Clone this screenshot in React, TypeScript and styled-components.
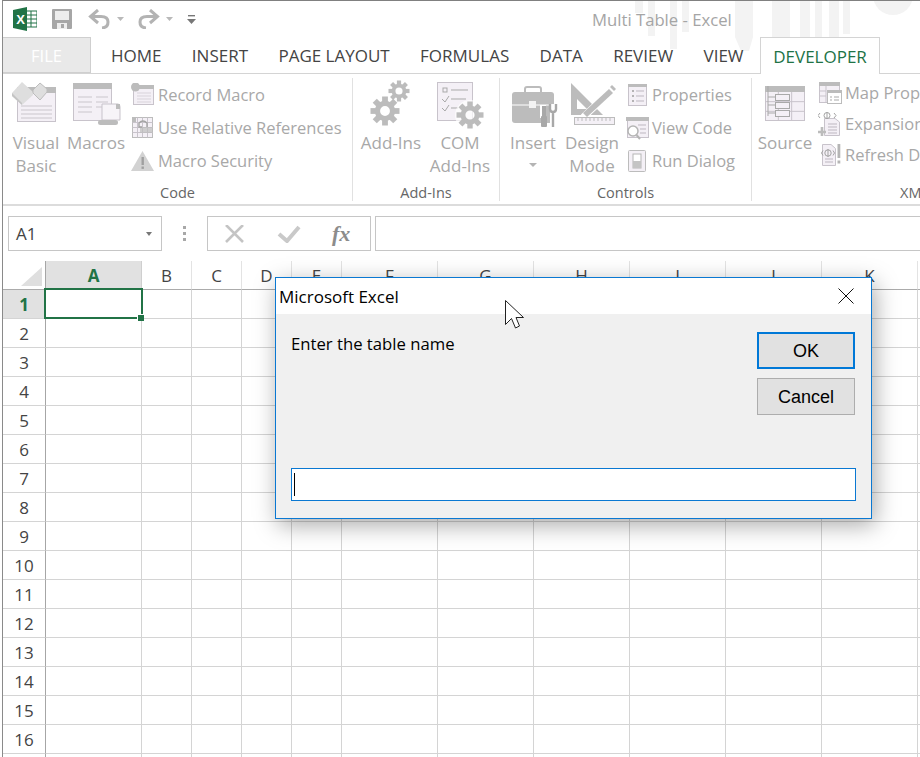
import React from "react";
import styled, { createGlobalStyle } from "styled-components";

const UI_FONT = `"Open Sans", "Noto Sans", "Liberation Sans", sans-serif`;
const GREY = "#bcbcbc";
const LAV = "#f4f0f6";
const EDGE = "#c8c3cb";
const LINE = "#d4d4d4";

const GlobalStyle = createGlobalStyle`
  html, body {
    margin: 0;
    padding: 0;
    background: #fff;
    overflow: hidden;
  }
  body {
    font-family: ${UI_FONT};
  }
`;

const Page = styled.div`
  width: 920px;
  height: 757px;
  overflow: hidden;
  padding-left: 2px;
  box-sizing: border-box;
`;

const Window = styled.div`
  position: relative;
  width: 918px;
  height: 757px;
  box-sizing: border-box;
  border-left: 1px solid #8a8a8a;
  border-top: 1px solid #808080;
  overflow: hidden;
`;

const TitleBar = styled.div`
  position: relative;
  height: 36px;
  display: flex;
  align-items: center;
`;

const TitlePattern = styled.svg`
  position: absolute;
  left: 0;
  top: 0;
`;

const QatIcon = styled.svg<{ $ml: number }>`
  position: relative;
  flex-shrink: 0;
  margin-left: ${(p) => p.$ml}px;
`;

const TitleText = styled.div`
  position: relative;
  margin-left: 396px;
  font-size: 16.7px;
  color: #a5a5a5;
  white-space: nowrap;
  margin-top: 1px;
`;

const TabBar = styled.div`
  position: relative;
  height: 36px;
  display: flex;
  border-bottom: 1px solid ${LINE};
`;

const FileTab = styled.div`
  width: 88px;
  height: 36px;
  margin-right: 4.8px;
  box-sizing: border-box;
  background: #e9e9e9;
  border: 1px solid #cfcfcf;
  border-left: none;
  display: flex;
  align-items: center;
  justify-content: center;
  color: #fff;
  font-size: 16.5px;
`;

const Tab = styled.div<{ $active?: boolean }>`
  height: 36px;
  box-sizing: border-box;
  display: flex;
  align-items: center;
  white-space: nowrap;
  font-size: 17px;
  color: ${(p) => (p.$active ? "#217346" : "#444")};
  padding: ${(p) => (p.$active ? "0 12.5px" : "0 15.2px")};
  ${(p) =>
    p.$active &&
    `
    margin-left: 1px;
    height: 37px;
    margin-bottom: -1px;
    background: #fff;
    border: 1px solid ${LINE};
    border-bottom: none;
  `}
`;

const Ribbon = styled.div`
  height: 123px;
  padding: 4px 0 3px;
  display: flex;
  border-bottom: 2px solid #dcdcdc;
`;

const Group = styled.div<{ $w: number; $pad: number }>`
  width: ${(p) => p.$w}px;
  flex-shrink: 0;
  box-sizing: border-box;
  display: flex;
  flex-direction: column;
  border-right: 1px solid #e1e1e1;
  padding-left: ${(p) => p.$pad}px;
`;

const GroupBody = styled.div`
  flex: 1;
  display: flex;
  gap: 2px;
`;

const GroupLabel = styled.div<{ $pad: number }>`
  margin-left: -${(p) => p.$pad}px;
  height: 16px;
  line-height: 16px;
  text-align: center;
  font-size: 14.5px;
  color: #666;
  white-space: nowrap;
`;

const LargeButton = styled.div<{ $w: number }>`
  width: ${(p) => p.$w}px;
  flex-shrink: 0;
  display: flex;
  flex-direction: column;
  align-items: center;
  color: #a8a8a8;
  font-size: 17px;
  line-height: 23px;
  text-align: center;
  white-space: nowrap;
`;

const LargeIcon = styled.svg`
  display: block;
  margin: 2px 0 1px;
  flex-shrink: 0;
`;

const DropCaret = styled.span`
  display: block;
  width: 0;
  height: 0;
  margin-top: 9px;
  border-left: 4px solid transparent;
  border-right: 4px solid transparent;
  border-top: 4px solid #b4b4b4;
`;

const SmallColumn = styled.div<{ $ml: number; $mt?: number }>`
  display: flex;
  flex-direction: column;
  margin-left: ${(p) => p.$ml}px;
  margin-top: ${(p) => p.$mt ?? 0}px;
`;

const SmallRow = styled.div<{ $h: number; $slot: number }>`
  height: ${(p) => p.$h}px;
  display: grid;
  grid-template-columns: ${(p) => p.$slot}px auto;
  align-items: center;
  color: #a8a8a8;
  font-size: 16.5px;
  white-space: nowrap;
`;

const FormulaBar = styled.div`
  height: 55px;
  box-sizing: border-box;
  padding: 10px 0 10px 5px;
  display: flex;
  align-items: flex-start;
`;

const BarBox = styled.div<{ $w: number }>`
  width: ${(p) => p.$w}px;
  height: 35px;
  flex-shrink: 0;
  box-sizing: border-box;
  border: 1px solid #c6c6c6;
  display: flex;
  align-items: center;
`;

const NameText = styled.span`
  flex: 1;
  padding-left: 7px;
  font-size: 17px;
  color: #444;
`;

const NameCaret = styled.span`
  width: 0;
  height: 0;
  margin-right: 9px;
  border-left: 3.5px solid transparent;
  border-right: 3.5px solid transparent;
  border-top: 4px solid #777;
`;

const Grip = styled.div`
  width: 45px;
  height: 35px;
  flex-shrink: 0;
  display: flex;
  flex-direction: column;
  align-items: center;
  justify-content: center;
  gap: 3px;
  span {
    width: 3px;
    height: 3px;
    background: #a8a8a8;
  }
`;

const BarGlyph = styled.svg<{ $ml: number }>`
  flex-shrink: 0;
  margin-left: ${(p) => p.$ml}px;
`;

const FxIcon = styled.span`
  font-family: "Liberation Serif", serif;
  font-style: italic;
  font-weight: 700;
  font-size: 22px;
  color: #8c8c8c;
  margin-left: 30px;
`;

const FormulaInput = styled(BarBox)`
  margin-left: 4px;
  border-right: none;
`;

const Sheet = styled.div`
  display: grid;
  grid-template-columns: 43px 96px repeat(4, 50px) repeat(6, 96px) 40px;
  grid-auto-rows: 29px;
`;

const Corner = styled.div`
  display: flex;
  align-items: flex-end;
  justify-content: flex-end;
  box-sizing: border-box;
  padding: 0 3px 3px 0;
  border-right: 1px solid #a6a6a6;
  border-bottom: 1px solid #ababab;
  svg {
    display: block;
  }
`;

const ColHead = styled.div<{ $on?: boolean }>`
  box-sizing: border-box;
  display: flex;
  align-items: center;
  justify-content: center;
  font-size: 17px;
  padding-top: 1px;
  color: ${(p) => (p.$on ? "#217346" : "#444")};
  font-weight: ${(p) => (p.$on ? 700 : 400)};
  background: ${(p) => (p.$on ? "#e1e1e1" : "#fff")};
  border-right: 1px solid ${(p) => (p.$on ? "#cfcfcf" : "#e3e3e3")};
  border-bottom: 1px solid #ababab;
`;

const RowHead = styled.div<{ $on?: boolean }>`
  box-sizing: border-box;
  display: flex;
  align-items: center;
  justify-content: center;
  font-size: 17px;
  color: ${(p) => (p.$on ? "#217346" : "#444")};
  font-weight: ${(p) => (p.$on ? 700 : 400)};
  background: ${(p) => (p.$on ? "#e1e1e1" : "#fff")};
  border-right: 1px solid #a6a6a6;
  border-bottom: 1px solid ${LINE};
`;

const Cell = styled.div`
  position: relative;
  box-sizing: border-box;
  border-right: 1px solid ${LINE};
  border-bottom: 1px solid ${LINE};
`;

const Selection = styled.div`
  position: absolute;
  left: -2px;
  top: -2px;
  right: -2px;
  bottom: -1px;
  border: 2px solid #217346;
  z-index: 1;
  &::after {
    content: "";
    position: absolute;
    right: -3px;
    bottom: -4px;
    width: 6px;
    height: 6px;
    background: #217346;
    border-left: 1px solid #fff;
    border-top: 1px solid #fff;
  }
`;

const Dialog = styled.div`
  position: absolute;
  left: 272px;
  top: 276px;
  width: 597px;
  height: 242px;
  box-sizing: border-box;
  display: flex;
  flex-direction: column;
  background: #f0f0f0;
  border: 1px solid #0a78d2;
  box-shadow: 3px 6px 22px rgba(0, 0, 0, 0.34);
  z-index: 3;
`;

const DialogTitle = styled.div`
  height: 36px;
  flex-shrink: 0;
  background: #fff;
  display: flex;
  align-items: center;
  justify-content: space-between;
  padding: 0 17px 0 3px;
  font-size: 17px;
  color: #000;
`;

const DialogBody = styled.div`
  flex: 1;
  display: flex;
  flex-direction: column;
  justify-content: space-between;
  padding: 18px 15px 17px 15px;
`;

const DialogTop = styled.div`
  display: flex;
  justify-content: space-between;
`;

const Message = styled.div`
  font-size: 16.7px;
  line-height: 24px;
  color: #000;
`;

const ButtonStack = styled.div`
  display: flex;
  flex-direction: column;
  gap: 9px;
  margin-right: 1px;
`;

const DialogButton = styled.div<{ $primary?: boolean }>`
  width: 98px;
  height: 37px;
  box-sizing: border-box;
  padding-top: 1px;
  display: flex;
  align-items: center;
  justify-content: center;
  background: #e1e1e1;
  border: ${(p) => (p.$primary ? "2px solid #0078d7" : "1px solid #adadad")};
  font-family: "Liberation Sans", sans-serif;
  font-size: 18px;
  color: #000;
`;

const NameField = styled.div`
  height: 33px;
  box-sizing: border-box;
  background: #fff;
  border: 1px solid #0a78d2;
  display: flex;
  align-items: center;
  padding-left: 2px;
`;

const TextCaret = styled.span`
  width: 1px;
  height: 23px;
  background: #000;
`;

const MousePointer = styled.svg`
  position: absolute;
  left: 500px;
  top: 297px;
  z-index: 4;
`;

const SmallSvg = styled.svg`
  display: block;
`;

const Gear = ({ cx, cy, r, fill = GREY }: { cx: number; cy: number; r: number; fill?: string }) => (
  <g>
    {[0, 45, 90, 135, 180, 225, 270, 315].map((a) => (
      <rect
        key={a}
        x={cx - r * 0.2}
        y={cy - r}
        width={r * 0.4}
        height={r * 0.5}
        fill={fill}
        transform={`rotate(${a} ${cx} ${cy})`}
      />
    ))}
    <circle cx={cx} cy={cy} r={r * 0.52} fill="none" stroke={fill} strokeWidth={r * 0.36} />
  </g>
);

const gridLines = (x: number, y: number, w: number, h: number, cols: number, rows: number) => {
  const out: React.ReactNode[] = [];
  for (let i = 1; i < cols; i++) {
    const px = x + (w * i) / cols;
    out.push(<path key={"c" + i} d={`M${px} ${y}V${y + h}`} stroke={EDGE} strokeWidth="1" />);
  }
  for (let i = 1; i < rows; i++) {
    const py = y + (h * i) / rows;
    out.push(<path key={"r" + i} d={`M${x} ${py}H${x + w}`} stroke={EDGE} strokeWidth="1" />);
  }
  return out;
};

const Sheetish = ({ x, y, w, h, head = 6 }: { x: number; y: number; w: number; h: number; head?: number }) => (
  <>
    <rect x={x + 0.5} y={y + 0.5} width={w - 1} height={h - 1} fill={LAV} stroke={EDGE} />
    <rect x={x} y={y} width={w} height={head} fill={GREY} />
  </>
);

const VisualBasicIcon = () => (
  <LargeIcon width="56" height="50" viewBox="0 0 56 50">
    <Sheetish x={9} y={7} w={39} h={35} />
    <g stroke="#d8d3da" strokeWidth="1.4">
      <path d="M13 26H44M13 30H44M13 34H44M13 38H44" />
    </g>
    <path d="M4 13L14 2L25 12L25 15L14 25L4 16Z" fill="#dedede" />
    <path d="M4 13L14 23L14 25L4 16Z" fill="#c4c4c4" />
    <path d="M25 10L32 3L39 9L39 12L32 20L25 13Z" fill="#dedede" stroke="#bcbcbc" />
  </LargeIcon>
);

const MacrosIcon = () => (
  <LargeIcon width="60" height="50" viewBox="0 0 60 50">
    <Sheetish x={7} y={3} w={39} h={38} />
    <path d="M12 17H26M30 17H42M12 22H26M30 22H42M12 27H26M30 27H36M12 32H26" stroke="#d8d3da" strokeWidth="1.4" />
    <path d="M36 24H52Q54 24 54 27V40H36Z" fill="#f7f4f8" stroke={EDGE} />
    <rect x={32} y={40} width={20} height={5} rx="2.5" fill={GREY} />
    <rect x={50} y={24} width={4} height={5} fill={GREY} />
  </LargeIcon>
);

const AddInsIcon = () => (
  <LargeIcon width="66" height="50" viewBox="0 0 66 50">
    <Gear cx={41} cy={11} r={10.5} />
    <Gear cx={27} cy={31} r={14.5} />
  </LargeIcon>
);

const ComIcon = () => (
  <LargeIcon width="68" height="50" viewBox="0 0 68 50">
    <rect x={11.5} y={2.5} width={35} height={38} fill={LAV} stroke={EDGE} />
    <rect x={17} y={8} width={4} height={4} fill="none" stroke="#a9a9a9" />
    <path d="M25 10H42M25 19H40M25 28H32" stroke="#a9a9a9" />
    <path d="M16 19L19 22L23 16M16 28L19 31L23 25" fill="none" stroke="#a9a9a9" />
    <circle cx={44} cy={35} r={15} fill="#fff" opacity="0.7" />
    <Gear cx={44} cy={35} r={13.5} />
  </LargeIcon>
);

const InsertIcon = () => (
  <LargeIcon width="54" height="50" viewBox="0 0 54 50">
    <path d="M19 13V9Q19 7 21 7H33Q35 7 35 9V13" fill="none" stroke={GREY} strokeWidth="2" />
    <rect x={6} y={12} width={42} height={31} rx="3" fill={GREY} />
    <path d="M6 25H48" stroke="#fff" strokeWidth="1" />
    <rect x={23} y={21} width={7} height={7} fill="#f2f2f2" />
    <path d="M37 25V38M47 24V47" stroke="#fff" strokeWidth="6" />
    <rect x={36} y={26} width={4} height={10} fill="#a8a8a8" />
    <rect x={35} y={36} width={6} height={11} rx="1" fill="#a8a8a8" />
    <path d="M44 24V29Q44 32 47 32Q50 32 50 29V24M47 32V47" fill="none" stroke="#a8a8a8" strokeWidth="2.4" />
  </LargeIcon>
);

const DesignIcon = () => (
  <LargeIcon width="60" height="50" viewBox="0 0 60 50">
    <path fillRule="evenodd" d="M9 3L41 35H9ZM15 19V29H25Z" fill={GREY} />
    <path d="M20 35L50 6L54 10L25 37L19 38Z" fill="#fff" stroke="#fff" strokeWidth="2" />
    <path d="M21 33L47 9L51 13L25 37Z" fill={GREY} />
    <path d="M48 7L50 5L54 9L52 11Z" fill={GREY} />
    <rect x={12.5} y={37.5} width={40} height={7} fill={LAV} stroke={GREY} />
    <path d="M16 38V41M20 38V41M24 38V41M28 38V41M32 38V41M36 38V41M40 38V41M44 38V41M48 38V41" stroke={GREY} />
  </LargeIcon>
);

const SourceIcon = () => (
  <LargeIcon width="60" height="50" viewBox="0 0 60 50">
    <Sheetish x={10} y={6} w={40} h={35} />
    {gridLines(10, 12, 40, 29, 3, 3)}
    <path d="M13 6V36M13 17H20M13 25H20M13 33H20" stroke="#a9a9a9" />
    <rect x={20.5} y={14.5} width={14} height={6} fill={LAV} stroke="#a9a9a9" />
    <rect x={20.5} y={22.5} width={14} height={6} fill={LAV} stroke="#a9a9a9" />
    <rect x={20.5} y={30.5} width={14} height={6} fill={LAV} stroke="#a9a9a9" />
  </LargeIcon>
);

const Small = ({ children }: { children: React.ReactNode }) => (
  <SmallSvg width="24" height="24" viewBox="0 0 24 24">
    {children}
  </SmallSvg>
);

const RecordIcon = () => (
  <Small>
    <rect x={2.5} y={2.5} width={20} height={19} fill={LAV} stroke={EDGE} />
    <rect x={2} y={2} width={21} height={4} fill={GREY} />
    <path d="M6 10H20M6 13H20M6 16H20M6 19H20" stroke="#d8d3da" />
    <circle cx={4.5} cy={4} r={4.5} fill={GREY} />
  </Small>
);

const RelativeIcon = () => (
  <Small>
    <rect x={1.5} y={1.5} width={20} height={20} fill={LAV} stroke={GREY} />
    {gridLines(1.5, 1.5, 20, 20, 4, 4)}
    <rect x={1} y={1} width={4} height={5} fill={GREY} />
    <rect x={9} y={11} width={12} height={6} fill={GREY} opacity="0.7" />
    <path d="M8 7Q12 3 16 7V11M8 7V11H11" fill="none" stroke="#a3a3a3" strokeWidth="1.4" />
  </Small>
);

const SecurityIcon = () => (
  <Small>
    <path d="M11.5 2L23 22H0Z" fill="#d2d2d2" />
    <rect x={10.5} y={8} width={2.4} height={8} fill="#9f9f9f" />
    <rect x={10.5} y={17.5} width={2.4} height={2.4} fill="#9f9f9f" />
  </Small>
);

const PropertiesIcon = () => (
  <Small>
    <rect x={2.5} y={1.5} width={18} height={21} fill={LAV} stroke={EDGE} />
    <rect x={2} y={1} width={19} height={3} fill={GREY} />
    <path d="M6 8H8M6 13H8M6 18H8" stroke="#9f9f9f" strokeWidth="1.6" />
    <path d="M10 8H18M10 13H18M10 18H18" stroke="#bdb7c0" />
  </Small>
);

const ViewCodeIcon = () => (
  <Small>
    <rect x={1.5} y={2.5} width={21} height={19} fill={LAV} stroke={EDGE} />
    <rect x={0} y={1} width={23} height={4} fill={GREY} />
    <path d="M12 9H20M14 13H20M14 17H20" stroke="#bdb7c0" />
    <circle cx={7} cy={15} r={5} fill="#fff" stroke="#b5b5b5" strokeWidth="1.5" />
    <path d="M10.5 19L14 23" stroke="#b5b5b5" strokeWidth="2" />
  </Small>
);

const RunDialogIcon = () => (
  <Small>
    <rect x={2.5} y={1.5} width={17} height={21} rx="1" fill={LAV} stroke={GREY} />
    <rect x={7} y={5} width={8} height={14} fill="#fff" stroke="#b5b5b5" />
    <rect x={7} y={12} width={8} height={7} fill="#c4c4c4" />
  </Small>
);

const MapPropIcon = () => (
  <Small>
    <rect x={1.5} y={1.5} width={20} height={20} fill={LAV} stroke={EDGE} />
    <rect x={1} y={1} width={21} height={4} fill={GREY} />
    <path d="M8 5V21M1 10H8M1 15H8" stroke={EDGE} />
    <rect x={9.5} y={9.5} width={14} height={13} fill="#fff" stroke={GREY} />
    <rect x={9} y={9} width={15} height={3} fill={GREY} />
    <path d="M12 16H14M16 16H21M12 19H14M16 19H21" stroke="#a9a9a9" />
  </Small>
);

const ExpansionIcon = () => (
  <Small>
    <path d="M6.5 6.5H17L21.5 10V23.5H6.5Z" fill={LAV} stroke={EDGE} />
    <path d="M10 12H19M10 15H19M10 18H19M10 21H19" stroke="#bdb7c0" />
    <circle cx={9} cy={3.5} r={3} fill="none" stroke="#a3a3a3" />
    <path d="M2 1L0 3.5L2 6M16 1L18 3.5L16 6M9 0V7" fill="none" stroke="#a3a3a3" />
    <path d="M0 20H8M4 15V24" stroke={GREY} strokeWidth="2.6" />
  </Small>
);

const RefreshIcon = () => (
  <Small>
    <path d="M4.5 1.5H13L17.5 5.5V22.5H4.5Z" fill={LAV} stroke={EDGE} />
    <circle cx={10} cy={10} r={3.2} fill="none" stroke="#a3a3a3" />
    <path d="M5 7.5L3.5 10L5 12.5M15 7.5L16.5 10L15 12.5M10 6V14" fill="none" stroke="#a3a3a3" />
    <path d="M7 16H15M7 19H15" stroke="#bdb7c0" />
    <rect x={19.5} y={1} width={2.8} height={14} fill="#b5b5b5" />
    <rect x={19.5} y={17.5} width={2.8} height={3} fill="#b5b5b5" />
  </Small>
);

const COLUMNS = ["A", "B", "C", "D", "E", "F", "G", "H", "I", "J", "K", ""];
const ROWS = Array.from({ length: 17 }, (_, i) => i + 1);

const TABS = ["HOME", "INSERT", "PAGE LAYOUT", "FORMULAS", "DATA", "REVIEW", "VIEW"];

export default function App() {
  return (
    <Page>
      <GlobalStyle />
      <Window>
        <TitlePattern width="915" height="60" viewBox="0 0 915 60">
          <g fill="#f3f3f3">
            <rect x="632" y="0" width="8" height="12" />
            <rect x="645" y="0" width="7" height="35" />
            <rect x="667" y="0" width="7" height="48" />
            <rect x="679" y="0" width="7" height="31" />
            <path d="M732 0H750V36L746 50H738L732 36Z" />
            <rect x="769" y="0" width="18" height="42" />
            <rect x="797" y="0" width="10" height="36" />
            <rect x="812" y="0" width="7" height="36" />
            <rect x="826" y="0" width="10" height="36" />
            <rect x="840" y="0" width="7" height="33" />
            <circle cx="890" cy="-6" r="20" />
          </g>
        </TitlePattern>
        <TitleBar>
          <QatIcon $ml={10} width="24" height="24" viewBox="0 0 24 24">
            <rect x="12" y="4" width="12" height="16" fill="#fff" stroke="#217346" />
            <path d="M12 8H24M12 12H24M12 16H24M18 4V20" stroke="#217346" />
            <path d="M0 3L14 0V24L0 21Z" fill="#217346" />
            <text x="3.2" y="17" fill="#fff" fontFamily="Liberation Sans, sans-serif" fontWeight="700" fontSize="13">
              X
            </text>
          </QatIcon>
          <QatIcon $ml={15} width="20" height="20" viewBox="0 0 20 20">
            <path d="M0 1Q0 0 1 0H19Q20 0 20 1V19Q20 20 19 20H1Q0 20 0 19Z" fill="#a6a6a6" />
            <rect x="3" y="2" width="14" height="9" fill="#ededed" />
            <rect x="5" y="14" width="10" height="6" fill="#ededed" />
            <rect x="9" y="15" width="3" height="4" fill="#a6a6a6" />
          </QatIcon>
          <QatIcon $ml={16} width="22" height="20" viewBox="0 0 22 20">
            <path d="M10 1L2.5 7.5L10 14" fill="none" stroke="#b3b3b3" strokeWidth="3" />
            <path d="M3 7.5H13Q20 7.5 20 13T14 19" fill="none" stroke="#b3b3b3" strokeWidth="3" />
          </QatIcon>
          <QatIcon $ml={7} width="7" height="4" viewBox="0 0 7 4">
            <path d="M0 0H7L3.5 4Z" fill="#b9b9b9" />
          </QatIcon>
          <QatIcon $ml={14} width="22" height="20" viewBox="0 0 22 20">
            <path d="M12 1L19.5 7.5L12 14" fill="none" stroke="#b3b3b3" strokeWidth="3" />
            <path d="M19 7.5H9Q2 7.5 2 13T8 19" fill="none" stroke="#b3b3b3" strokeWidth="3" />
          </QatIcon>
          <QatIcon $ml={6} width="7" height="4" viewBox="0 0 7 4">
            <path d="M0 0H7L3.5 4Z" fill="#b9b9b9" />
          </QatIcon>
          <QatIcon $ml={14} width="9" height="9" viewBox="0 0 9 9">
            <rect x="1" y="0" width="7" height="1.4" fill="#777" />
            <path d="M0 4H9L4.5 9Z" fill="#777" />
          </QatIcon>
          <TitleText>Multi Table - Excel</TitleText>
        </TitleBar>

        <TabBar>
          <FileTab>FILE</FileTab>
          {TABS.map((name) => (
            <Tab key={name}>{name}</Tab>
          ))}
          <Tab $active>DEVELOPER</Tab>
        </TabBar>

        <Ribbon>
          <Group $w={350} $pad={5}>
            <GroupBody>
              <LargeButton $w={56}>
                <VisualBasicIcon />
                Visual
                <br />
                Basic
              </LargeButton>
              <LargeButton $w={60}>
                <MacrosIcon />
                Macros
              </LargeButton>
              <SmallColumn $ml={3}>
                <SmallRow $h={33} $slot={27}>
                  <RecordIcon />
                  Record Macro
                </SmallRow>
                <SmallRow $h={33} $slot={27}>
                  <RelativeIcon />
                  Use Relative References
                </SmallRow>
                <SmallRow $h={33} $slot={27}>
                  <SecurityIcon />
                  Macro Security
                </SmallRow>
              </SmallColumn>
            </GroupBody>
            <GroupLabel $pad={5}>Code</GroupLabel>
          </Group>

          <Group $w={147} $pad={5}>
            <GroupBody>
              <LargeButton $w={66}>
                <AddInsIcon />
                Add-Ins
              </LargeButton>
              <LargeButton $w={68}>
                <ComIcon />
                COM
                <br />
                Add-Ins
              </LargeButton>
            </GroupBody>
            <GroupLabel $pad={5}>Add-Ins</GroupLabel>
          </Group>

          <Group $w={252} $pad={6}>
            <GroupBody>
              <LargeButton $w={54}>
                <InsertIcon />
                Insert
                <DropCaret />
              </LargeButton>
              <LargeButton $w={60}>
                <DesignIcon />
                Design
                <br />
                Mode
              </LargeButton>
              <SmallColumn $ml={2}>
                <SmallRow $h={33} $slot={26}>
                  <PropertiesIcon />
                  Properties
                </SmallRow>
                <SmallRow $h={33} $slot={26}>
                  <ViewCodeIcon />
                  View Code
                </SmallRow>
                <SmallRow $h={33} $slot={26}>
                  <RunDialogIcon />
                  Run Dialog
                </SmallRow>
              </SmallColumn>
            </GroupBody>
            <GroupLabel $pad={6}>Controls</GroupLabel>
          </Group>

          <Group $w={326} $pad={3}>
            <GroupBody>
              <LargeButton $w={60}>
                <SourceIcon />
                Source
              </LargeButton>
              <SmallColumn $ml={1} $mt={-1}>
                <SmallRow $h={31} $slot={27}>
                  <MapPropIcon />
                  Map Properties
                </SmallRow>
                <SmallRow $h={31} $slot={27}>
                  <ExpansionIcon />
                  Expansion Packs
                </SmallRow>
                <SmallRow $h={31} $slot={27}>
                  <RefreshIcon />
                  Refresh Data
                </SmallRow>
              </SmallColumn>
            </GroupBody>
            <GroupLabel $pad={3}>XML</GroupLabel>
          </Group>
        </Ribbon>

        <FormulaBar>
          <BarBox $w={154}>
            <NameText>A1</NameText>
            <NameCaret />
          </BarBox>
          <Grip>
            <span />
            <span />
            <span />
          </Grip>
          <BarBox $w={164}>
            <BarGlyph $ml={15} width="26" height="18" viewBox="0 0 26 18">
              <path d="M3 0L20 17M20 0L3 17" stroke="#c4c4c4" strokeWidth="2.6" />
            </BarGlyph>
            <BarGlyph $ml={27} width="26" height="18" viewBox="0 0 26 18">
              <path d="M3 9L11 16L23 2" fill="none" stroke="#c9c9c9" strokeWidth="4" />
            </BarGlyph>
            <FxIcon>fx</FxIcon>
          </BarBox>
          <FormulaInput $w={560} />
        </FormulaBar>

        <Sheet>
          <Corner>
            <svg width="21" height="19" viewBox="0 0 21 19">
              <path d="M21 0V19H0Z" fill="#dfdfdf" />
            </svg>
          </Corner>
          {COLUMNS.map((c, i) => (
            <ColHead key={"col-" + i} $on={c === "A"}>
              {c}
            </ColHead>
          ))}
          {ROWS.map((r) => (
            <React.Fragment key={"row-" + r}>
              <RowHead $on={r === 1}>{r}</RowHead>
              {COLUMNS.map((c, i) => (
                <Cell key={r + "-" + i}>{r === 1 && c === "A" && <Selection />}</Cell>
              ))}
            </React.Fragment>
          ))}
        </Sheet>

        <Dialog>
          <DialogTitle>
            Microsoft Excel
            <svg width="16" height="16" viewBox="0 0 16 16">
              <path d="M0.5 0.5L15.5 15.5M15.5 0.5L0.5 15.5" stroke="#111" strokeWidth="1" />
            </svg>
          </DialogTitle>
          <DialogBody>
            <DialogTop>
              <Message>Enter the table name</Message>
              <ButtonStack>
                <DialogButton $primary>OK</DialogButton>
                <DialogButton>Cancel</DialogButton>
              </ButtonStack>
            </DialogTop>
            <NameField>
              <TextCaret />
            </NameField>
          </DialogBody>
        </Dialog>

        <MousePointer width="26" height="34" viewBox="0 0 26 34">
          <path d="M2.5 2.5V26.5L8.5 20.5L12.5 30L16.5 28L13 19.5H20.5Z" fill="#fff" stroke="#222" strokeWidth="1" />
        </MousePointer>
      </Window>
    </Page>
  );
}
